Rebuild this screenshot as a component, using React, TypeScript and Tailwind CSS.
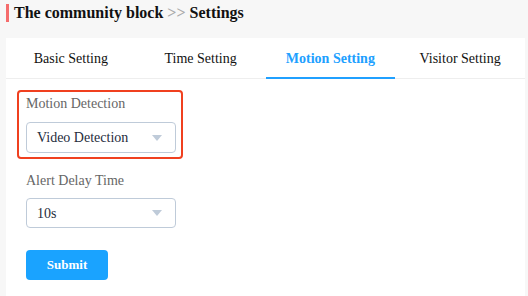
import React from "react";

const tabs = ["Basic Setting", "Time Setting", "Motion Setting", "Visitor Setting"];

function Caret() {
  return (
    <svg width="10" height="6" viewBox="0 0 10 6" className="block">
      <path d="M0 0 L10 0 L5 6 Z" fill="#bfcbd9" />
    </svg>
  );
}

function Select({ value, h }: { value: string; h: string }) {
  return (
    <div
      className={`flex w-[150px] items-center justify-between rounded-[4px] border border-[#bfcbd9] bg-white pl-[10px] pr-[13px] ${h}`}
    >
      <span className="text-[14px] text-[#1f2d3d]">{value}</span>
      <Caret />
    </div>
  );
}

export default function App() {
  return (
    <div
      className="flex h-[296px] w-full flex-col bg-[#f7f7f7]"
      style={{ fontFamily: '"Liberation Serif", "Times New Roman", serif' }}
    >
      <div className="flex h-[38px] items-start pl-[6px] pt-[4px]">
        <div className="h-[18px] w-[3px] bg-[#f56c6c]" />
        <div className="ml-[5px] text-[16px] font-bold leading-[18px] text-[#111]">
          The community block <span className="text-[#aaaaaa]">&gt;&gt;</span> Settings
        </div>
      </div>
      <div className="ml-[6px] mr-[3px] flex-1 bg-white">
        <div className="flex h-[41px] border-b border-[#eeeeee]">
          {tabs.map((t, i) => (
            <div
              key={t}
              className={`relative flex w-[130px] items-center justify-center text-[14px] ${
                i === 2 ? "font-bold text-[#20a0ff]" : "text-[#111]"
              }`}
            >
              {t}
              {i === 2 && <div className="absolute bottom-[-1px] left-0 h-[2px] w-full bg-[#20a0ff]" />}
            </div>
          ))}
        </div>
        <div className="ml-[11px] mt-[11px] h-[69px] w-[166px] rounded-[4px] border-2 border-[#f0401f] px-[7px] pt-[2px]">
          <div className="text-[14px] leading-[20px] text-[#666]">Motion Detection</div>
          <div className="mt-[8px]">
            <Select value="Video Detection" h="h-[31px]" />
          </div>
        </div>
        <div className="ml-[20px] mt-[12px]">
          <div className="text-[14px] leading-[20px] text-[#666]">Alert Delay Time</div>
          <div className="mt-[7px]">
            <Select value="10s" h="h-[30px]" />
          </div>
          <button className="mt-[22px] flex h-[30px] w-[82px] items-center justify-center rounded-[4px] bg-[#1aa3ff] text-[13px] font-bold text-white">
            Submit
          </button>
        </div>
      </div>
    </div>
  );
}
